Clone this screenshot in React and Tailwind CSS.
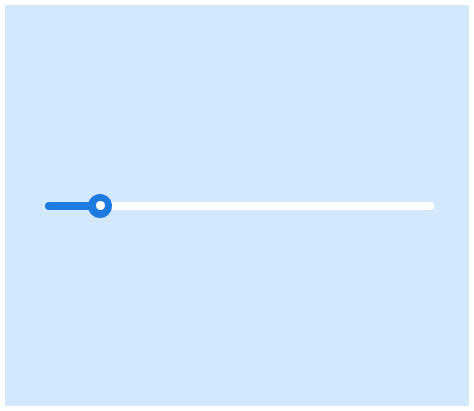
export default function App() {
  const pct = 14.2;
  return (
    <div className="w-[474px] h-[411px] bg-white p-[5px]">
      <div className="w-full h-full bg-[#d3e8fb] flex items-center pl-[40px] pr-[35px]">
        <div className="relative w-full h-[8px] rounded-full bg-white">
          <div className="absolute left-0 top-0 h-full rounded-full bg-[#1f7ae0]" style={{ width: `${pct}%` }} />
          <div
            className="absolute top-1/2 -translate-x-1/2 -translate-y-1/2 w-[24px] h-[24px] rounded-full bg-[#1f7ae0] flex items-center justify-center"
            style={{ left: `${pct}%` }}
          >
            <div className="w-[9px] h-[9px] rounded-full bg-white" />
          </div>
        </div>
      </div>
    </div>
  );
}
